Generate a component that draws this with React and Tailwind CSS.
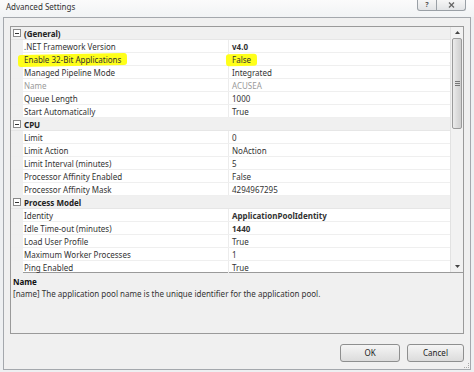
import React from "react";

const sections = [
  {
    title: "(General)",
    rows: [
      { label: ".NET Framework Version", value: "v4.0", bold: true },
      { label: "Enable 32-Bit Applications", value: "False", mark: true },
      { label: "Managed Pipeline Mode", value: "Integrated" },
      { label: "Name", value: "ACUSEA", dim: true },
      { label: "Queue Length", value: "1000" },
      { label: "Start Automatically", value: "True" },
    ],
  },
  {
    title: "CPU",
    rows: [
      { label: "Limit", value: "0" },
      { label: "Limit Action", value: "NoAction" },
      { label: "Limit Interval (minutes)", value: "5" },
      { label: "Processor Affinity Enabled", value: "False" },
      { label: "Processor Affinity Mask", value: "4294967295" },
    ],
  },
  {
    title: "Process Model",
    rows: [
      { label: "Identity", value: "ApplicationPoolIdentity", bold: true },
      { label: "Idle Time-out (minutes)", value: "1440", bold: true },
      { label: "Load User Profile", value: "True" },
      { label: "Maximum Worker Processes", value: "1" },
      { label: "Ping Enabled", value: "True" },
    ],
  },
];

function Minus() {
  return (
    <span className="w-[8px] h-[8px] border border-[#8a8a8a] bg-white flex items-center justify-center">
      <span className="w-[4px] h-px bg-[#333]" />
    </span>
  );
}

function Marker({ children }) {
  return (
    <span className="relative">
      <span className="absolute left-[-6px] right-[-6px] top-[0px] bottom-[-1px] bg-[#ffff1a] rounded-[3px] -rotate-1" />
      <span className="relative">{children}</span>
    </span>
  );
}

export default function App() {
  return (
    <div
      className="w-[474px] h-[372px] bg-[#eef0f2] flex flex-col overflow-hidden text-[#222]"
      style={{ fontFamily: '"Noto Sans", "Open Sans", sans-serif' }}
    >
      <div className="h-[17px] flex items-start justify-between bg-gradient-to-b from-[#fbfbfb] to-[#f1f3f5]">
        <span className="text-[8px] leading-[12px] text-[#333] pl-[6px] pt-[1px]">Advanced Settings</span>
        <div className="flex mr-[8px]">
          <div className="w-[20px] h-[11px] border border-t-0 border-[#9aa0a6] rounded-bl-[3px] bg-gradient-to-b from-[#f6f6f6] to-[#e2e4e6] flex items-center justify-center text-[7px] leading-[8px] font-bold text-[#555]">
            ?
          </div>
          <div className="w-[29px] h-[11px] border border-t-0 border-l-0 border-[#9aa0a6] rounded-br-[3px] bg-gradient-to-b from-[#f6f6f6] to-[#e2e4e6] flex items-center justify-center">
            <svg width="7" height="6" viewBox="0 0 7 6">
              <path d="M1 0.5 L6 5.5 M6 0.5 L1 5.5" stroke="#666" strokeWidth="1.3" />
            </svg>
          </div>
        </div>
      </div>

      <div className="flex-1 mx-[3px] mb-[2px] border border-[#a4a8ad] bg-[#f0f0f0] flex flex-col px-[6px] pt-[8px] relative">
        <div className="h-[247px] border border-[#9a9a9a] bg-white flex">
          <div className="flex-1 flex flex-col text-[8px] leading-[13px]">
            {sections.map((s) => (
              <div key={s.title} className="flex flex-col">
                <div className="h-[13px] flex items-center bg-[#f0f0f0] border-b border-[#e6e6e6]">
                  <div className="w-[12px] flex justify-center">
                    <Minus />
                  </div>
                  <span className="pl-[1px] font-bold text-[#222]">{s.title}</span>
                </div>
                {s.rows.map((r) => (
                  <div key={r.label} className="h-[13px] flex border-b border-[#efefef]">
                    <div className="w-[12px] bg-[#f0f0f0]" />
                    <div
                      className={`w-[206px] pl-[1px] border-r border-[#ececec] whitespace-nowrap ${
                        r.dim ? "text-[#9a9a9a]" : "text-[#333]"
                      }`}
                    >
                      {r.mark ? <Marker>{r.label}</Marker> : r.label}
                    </div>
                    <div
                      className={`pl-[3px] whitespace-nowrap ${r.bold ? "font-bold text-[#111]" : ""} ${
                        r.dim ? "text-[#9a9a9a]" : "text-[#333]"
                      }`}
                    >
                      {r.mark ? <Marker>{r.value}</Marker> : r.value}
                    </div>
                  </div>
                ))}
              </div>
            ))}
          </div>
          <div className="w-[13px] bg-[#f2f2f2] border-l border-[#e2e2e2] flex flex-col">
            <div className="h-[11px] flex items-center justify-center text-[#444]">
              <svg width="5" height="3" viewBox="0 0 5 3">
                <path d="M0 3 L2.5 0 L5 3 Z" fill="#444" />
              </svg>
            </div>
            <div className="mx-[1px] h-[91px] border border-[#9a9a9a] rounded-[2px] bg-gradient-to-r from-[#ececec] via-[#dcdcdc] to-[#cfcfcf] flex items-center justify-center">
              <div className="flex flex-col gap-px">
                <span className="w-[5px] h-px bg-[#777]" />
                <span className="w-[5px] h-px bg-[#777]" />
                <span className="w-[5px] h-px bg-[#777]" />
              </div>
            </div>
            <div className="flex-1" />
            <div className="h-[11px] flex items-center justify-center">
              <svg width="5" height="3" viewBox="0 0 5 3">
                <path d="M0 0 L2.5 3 L5 0 Z" fill="#444" />
              </svg>
            </div>
          </div>
        </div>

        <div className="h-[61px] border border-[#9a9a9a] border-t-0 bg-[#f0f0f0] px-[2px] pt-[3px] text-[8px] leading-[12px]">
          <div className="font-bold text-[#111]">Name</div>
          <div className="text-[#333]">
            [name] The application pool name is the unique identifier for the application pool.
          </div>
        </div>

        <div className="flex justify-end gap-[7px] mt-[10px]">
          <button className="w-[60px] h-[18px] border border-[#8e8f8f] rounded-[3px] bg-gradient-to-b from-[#f5f5f5] to-[#dcdcdc] text-[8px] text-[#222]">
            OK
          </button>
          <button className="w-[57px] h-[18px] border border-[#8e8f8f] rounded-[3px] bg-gradient-to-b from-[#f5f5f5] to-[#dcdcdc] text-[8px] text-[#222]">
            Cancel
          </button>
        </div>

        <div className="absolute right-[1px] bottom-[1px] w-[5px] h-[5px] border-r border-b border-dotted border-[#aaa]" />
      </div>
    </div>
  );
}
